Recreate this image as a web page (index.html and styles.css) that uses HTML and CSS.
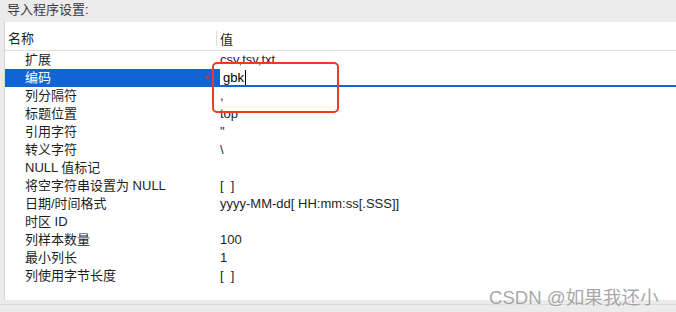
FILE: index.html
```html
<!DOCTYPE html>
<html lang="zh-CN">
<head>
    <meta charset="UTF-8">
    <title>导入程序设置</title>
    <link rel="stylesheet" href="styles.css">
</head>
<body>
    <div class="title">导入程序设置:</div>
    <div class="panel">
        <div class="head">
            <div class="col name">名称</div>
            <div class="col val">值</div>
        </div>
        <div class="rows">
            <div class="row"><div class="name">扩展</div><div class="val">csv,tsv,txt</div></div>
            <div class="row selected">
                <div class="name">编码</div>
                <div class="val"><span class="edit">gbk<span class="caret"></span></span></div>
                <span class="dot"></span>
            </div>
            <div class="row"><div class="name">列分隔符</div><div class="val">,</div></div>
            <div class="row"><div class="name">标题位置</div><div class="val">top</div></div>
            <div class="row"><div class="name">引用字符</div><div class="val">"</div></div>
            <div class="row"><div class="name">转义字符</div><div class="val">\</div></div>
            <div class="row"><div class="name">NULL 值标记</div><div class="val"></div></div>
            <div class="row"><div class="name">将空字符串设置为 NULL</div><div class="val">[&nbsp;&nbsp;]</div></div>
            <div class="row"><div class="name">日期/时间格式</div><div class="val">yyyy-MM-dd[ HH:mm:ss[.SSS]]</div></div>
            <div class="row"><div class="name">时区 ID</div><div class="val"></div></div>
            <div class="row"><div class="name">列样本数量</div><div class="val">100</div></div>
            <div class="row"><div class="name">最小列长</div><div class="val">1</div></div>
            <div class="row"><div class="name">列使用字节长度</div><div class="val">[&nbsp;&nbsp;]</div></div>
        </div>
        <div class="mark"></div>
        <div class="watermark">CSDN @如果我还小</div>
    </div>
    <div class="foot"></div>
</body>
</html>
```
FILE: styles.css
```css
* {
    margin: 0;
    padding: 0;
    box-sizing: border-box;
}

body {
    width: 676px;
    height: 312px;
    overflow: hidden;
    background-color: #ebebeb;
    font-family: "Liberation Sans", "Noto Sans CJK SC", sans-serif;
    font-size: 13px;
    color: #1e1e1e;
}

.title {
    height: 22px;
    padding-left: 7px;
    line-height: 20px;
    color: #3a3a3a;
}

.panel {
    position: relative;
    height: 278px;
    margin-left: 4px;
    background-color: #fff;
    border-left: 1px solid #d6d6d6;
}

.head {
    display: flex;
    height: 29px;
    padding-top: 4px;
    border-bottom: 1px solid #dedede;
    align-items: center;
}

.head .name {
    width: 212px;
    padding-left: 3px;
    height: 15px;
    line-height: 15px;
    border-right: 1px solid #dcdcdc;
}

.head .val {
    padding-left: 3px;
}

.rows {
    display: flex;
    flex-direction: column;
}

.row {
    position: relative;
    display: flex;
    height: 18px;
    line-height: 18px;
}

.row .name {
    width: 215px;
    padding-left: 20px;
}

.row .val {
    flex: 1;
}

.row.selected {
    color: #fff;
}

.row.selected .name {
    background-color: #1064d4;
}

.row.selected .val {
    background-color: #fff;
    border-bottom: 2px solid #1064d4;
    color: #000;
    line-height: 17px;
    padding-left: 3px;
}

.edit {
    display: inline-flex;
    align-items: center;
}

.caret {
    display: inline-block;
    width: 1px;
    height: 15px;
    background-color: #000;
    margin-left: 1px;
}

.dot {
    position: absolute;
    left: 201px;
    top: 7px;
    width: 3px;
    height: 3px;
    background-color: #e8301a;
    border-radius: 1px;
}

.mark {
    position: absolute;
    left: 207px;
    top: 40px;
    width: 127px;
    height: 51px;
    border: 2.5px solid #f03a1c;
    border-radius: 5px;
}

.watermark {
    position: absolute;
    left: 484px;
    top: 260px;
    font-size: 18.6px;
    color: #9a9a9a;
    text-shadow: 0 0 2px #fff;
    opacity: 0.85;
}

.foot {
    height: 12px;
    border-top: 4px solid #ebebeb;
    box-shadow: inset 0 1px 0 #dcdcdc;
}
```
